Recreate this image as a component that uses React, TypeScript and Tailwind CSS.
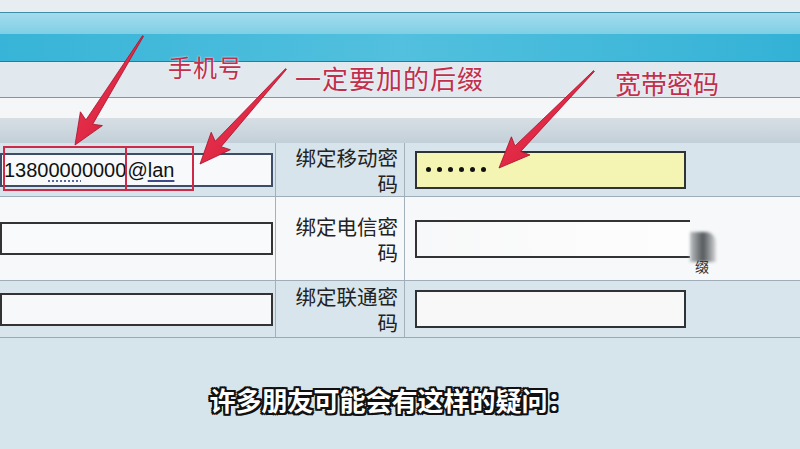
import React from 'react';

type Pt = [number, number];

// tapered arrow: thin tail widening into a head at the tip
function arrowPoints(tail: Pt, tip: Pt, shaftW = 8, headL = 27, headW = 26) {
  const dx = tip[0] - tail[0];
  const dy = tip[1] - tail[1];
  const len = Math.hypot(dx, dy);
  const ux = dx / len;
  const uy = dy / len;
  const nx = -uy;
  const ny = ux;
  const bx = tip[0] - ux * headL;
  const by = tip[1] - uy * headL;
  const pts: Pt[] = [
    [tail[0] + nx * 0.6, tail[1] + ny * 0.6],
    [bx + (nx * shaftW) / 2, by + (ny * shaftW) / 2],
    [bx + (nx * headW) / 2 - ux * 4, by + (ny * headW) / 2 - uy * 4],
    tip,
    [bx - (nx * headW) / 2 - ux * 4, by - (ny * headW) / 2 - uy * 4],
    [bx - (nx * shaftW) / 2, by - (ny * shaftW) / 2],
    [tail[0] - nx * 0.6, tail[1] - ny * 0.6],
  ];
  return pts.map((p) => `${p[0].toFixed(1)},${p[1].toFixed(1)}`).join(' ');
}

const arrows: { tail: Pt; tip: Pt }[] = [
  { tail: [143, 36], tip: [75, 145] },
  { tail: [286, 69], tip: [200, 164] },
  { tail: [594, 71], tip: [499, 168] },
];

function Label({ text }: { text: string }) {
  return (
    <div className="flex flex-col items-end justify-center border-r border-[#a3b1bb] pr-[6px] text-[20.5px] leading-[26px] text-[#222]">
      <div>{text}</div>
      <div>码</div>
    </div>
  );
}

export default function App() {
  return (
    <div className="relative flex h-[449px] w-[800px] flex-col overflow-hidden bg-[#d6e4ec] font-['Noto_Sans_CJK_SC',sans-serif]">
      {/* header bands */}
      <div className="h-[12px] bg-[#e7edf0]" />
      <div className="h-[1px] bg-[#3d8ea6]" />
      <div className="h-[21px] bg-gradient-to-b from-[#a2dcee] to-[#7fcfe5]" />
      <div className="h-[27px] bg-gradient-to-r from-[#37b4d7] via-[#52c0de] to-[#33b2d6]" />
      <div className="h-[1px] bg-[#2b7b93]" />
      <div className="h-[35px] bg-[#e1e8ee]" />
      <div className="h-[1px] bg-[#86949f]" />
      <div className="h-[20px] bg-[#f4f6f8]" />
      <div className="h-[25px] bg-gradient-to-b from-[#d7dfe5] to-[#c3cfd8]" />

      {/* form rows */}
      <div className="grid h-[54px] grid-cols-[276px_129px_1fr] border-b border-[#9eadb8] bg-[#d8e4ec]">
        <div className="flex items-center border-r border-[#a3b1bb]">
          <div className="flex h-[34px] w-[273px] items-center border-2 border-[#3d4d68] bg-[#f7f9fb] pl-[2px] font-['Liberation_Sans',sans-serif] text-[20px] text-[#111]">
            <span>
              1380
              <span className="underline decoration-dotted decoration-[#5a6a9a] underline-offset-[4px]">000</span>
              0000
            </span>
            <span className="ml-[1px]">
              @<span className="underline decoration-[#3a4a8a] underline-offset-[3px]">lan</span>
            </span>
          </div>
        </div>
        <Label text="绑定移动密" />
        <div className="flex items-center pl-[10px]">
          <div className="flex h-[38px] w-[271px] items-center gap-[6px] border-2 border-[#2f3336] bg-[#f4f5b2] pl-[9px]">
            {[0, 1, 2, 3, 4, 5].map((i) => (
              <span key={i} className="h-[5px] w-[5px] rounded-full bg-[#111]" />
            ))}
          </div>
        </div>
      </div>

      <div className="grid h-[84px] grid-cols-[276px_129px_1fr] border-b border-[#9eadb8] bg-[#f6f8f9]">
        <div className="flex items-center border-r border-[#a3b1bb]">
          <div className="h-[33px] w-[273px] border-2 border-[#333] bg-[#f9fafb]" />
        </div>
        <Label text="绑定电信密" />
        <div className="flex items-center pl-[10px]">
          <div className="h-[38px] w-[275px] border-2 border-r-0 border-[#333] bg-gradient-to-r from-[#f7f8f9] via-[#fbfbfb] to-[#fdfdfd]" />
        </div>
      </div>

      <div className="grid h-[57px] grid-cols-[276px_129px_1fr] border-b border-[#9aaab5] bg-[#d9e5ed]">
        <div className="flex items-center border-r border-[#a3b1bb]">
          <div className="h-[33px] w-[273px] border-2 border-[#333] bg-[#f7f8f9]" />
        </div>
        <Label text="绑定联通密" />
        <div className="flex items-center pl-[10px]">
          <div className="h-[38px] w-[271px] border-2 border-[#2f3336] bg-[#f8f8f8]" />
        </div>
      </div>

      {/* subtitle */}
      <div className="flex flex-1 justify-center pr-[17px] pt-[44px]">
        <span className="text-[26px] font-bold leading-[36px] text-white [text-shadow:-2px_-2px_0_#111,2px_-2px_0_#111,-2px_2px_0_#111,2px_2px_0_#111,0_2px_0_#111,0_-2px_0_#111,2px_0_0_#111,-2px_0_0_#111]">
          许多朋友可能会有这样的疑问：
        </span>
      </div>

      {/* smeared artifact next to the telecom input */}
      <div className="absolute left-[690px] top-[232px] h-[30px] w-[26px] rounded-tr-[10px] bg-gradient-to-r from-[#bfc3c6] via-[#55595c] to-[#d8dadb] blur-[1.5px]" />
      <span className="absolute left-[695px] top-[258px] text-[14px] leading-[16px] text-[#333]">缀</span>

      {/* red annotations */}
      <span className="absolute left-[168px] top-[53px] text-[24px] leading-[28px] tracking-[1px] text-[#c02f4c] [text-shadow:0_0_2px_#fff]">
        手机号
      </span>
      <span className="absolute left-[295px] top-[63px] text-[26px] leading-[30px] tracking-[1px] text-[#c02f4c] [text-shadow:0_0_2px_#fff]">
        一定要加的后缀
      </span>
      <span className="absolute left-[615px] top-[68px] text-[26px] leading-[30px] text-[#c02f4c] [text-shadow:0_0_2px_#fff]">
        宽带密码
      </span>

      <div className="absolute left-[3px] top-[146px] h-[45px] w-[124px] border-[2.5px] border-[#cc2a47]" />
      <div className="absolute left-[125px] top-[146px] h-[45px] w-[69px] border-[2.5px] border-[#cc2a47]" />

      <svg className="pointer-events-none absolute left-0 top-0" width="800" height="449" viewBox="0 0 800 449">
        <defs>
          <linearGradient id="arrowFill" x1="0" y1="0" x2="1" y2="1">
            <stop offset="0" stopColor="#f04058" />
            <stop offset="1" stopColor="#d01434" />
          </linearGradient>
        </defs>
        {arrows.map((a, i) => (
          <polygon
            key={i}
            points={arrowPoints(a.tail, a.tip)}
            fill="url(#arrowFill)"
            stroke="#a8102c"
            strokeWidth="0.8"
            strokeLinejoin="round"
          />
        ))}
      </svg>
    </div>
  );
}
